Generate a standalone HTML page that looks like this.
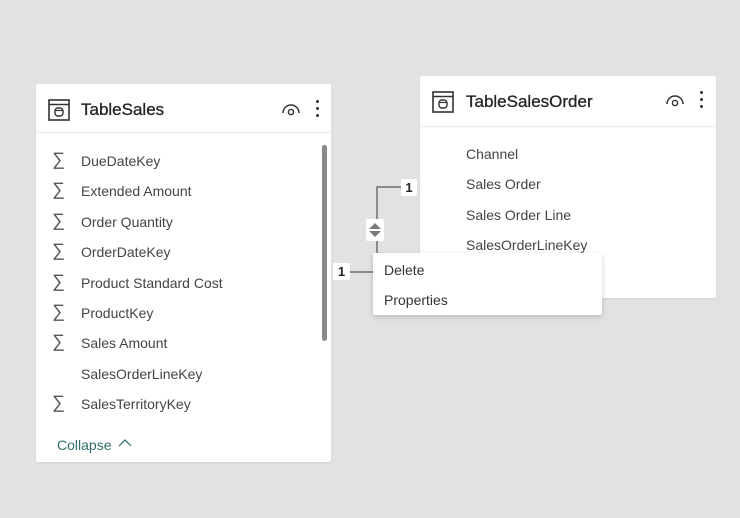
<!DOCTYPE html>
<html><head><meta charset="utf-8"><style>
body{margin:0;width:740px;height:518px;background:#e3e2e1;position:relative;overflow:hidden;font-family:"Liberation Sans",sans-serif;}
.card{position:absolute;background:#fff;border-radius:2px;box-shadow:0 1px 2px rgba(0,0,0,.08);}
.hdr{position:absolute;left:0;right:0;top:0;border-bottom:1px solid #ececec;}
.title{position:absolute;font-size:17px;color:#252423;-webkit-text-stroke:0.3px #252423;}
.row{position:absolute;font-size:14px;color:#444;white-space:nowrap;margin-top:2px;}
.sig{position:absolute;font-size:18px;color:#555;margin-top:-1px;}
.abs{position:absolute;}
.lbl{position:absolute;background:#fff;font-size:13px;font-weight:bold;color:#222;text-align:center;border-radius:2px;}
</style></head><body>
<div class="card" style="left:36px;top:84px;width:295px;height:378px;">
  <div class="hdr" style="height:48px;"></div>
  <svg class="abs" style="left:12px;top:15px" width="22" height="22" viewBox="0 0 22 22"><rect x="1" y="1" width="20" height="20" fill="none" stroke="#333" stroke-width="1.6"/><line x1="1" y1="5.5" x2="21" y2="5.5" stroke="#333" stroke-width="1.4"/><rect x="7" y="9" width="8" height="8" rx="3" fill="none" stroke="#333" stroke-width="1.4"/><line x1="7" y1="11.5" x2="15" y2="11.5" stroke="#333" stroke-width="1.2"/></svg>
  <div class="title" style="left:45px;top:16px;">TableSales</div>
  <svg class="abs" style="left:245px;top:17px" width="20" height="16" viewBox="0 0 20 16"><path d="M2 12 A8 8 0 0 1 18 12" fill="none" stroke="#333" stroke-width="1.5"/><circle cx="10" cy="11" r="2.6" fill="none" stroke="#333" stroke-width="1.4"/></svg>
  <div class="abs" style="left:280px;top:16px;width:3px;height:3px;background:#333;border-radius:50%;box-shadow:0 7px 0 #333,0 14px 0 #333"></div>
  <div class="abs" style="left:286px;top:61px;width:5px;height:196px;background:#8a8a8a;border-radius:3px;"></div>
  <div class="sig" style="left:16px;top:66px">∑</div><div class="row" style="left:45px;top:67px">DueDateKey</div>
  <div class="sig" style="left:16px;top:96px">∑</div><div class="row" style="left:45px;top:97px">Extended Amount</div>
  <div class="sig" style="left:16px;top:127px">∑</div><div class="row" style="left:45px;top:128px">Order Quantity</div>
  <div class="sig" style="left:16px;top:157px">∑</div><div class="row" style="left:45px;top:158px">OrderDateKey</div>
  <div class="sig" style="left:16px;top:188px">∑</div><div class="row" style="left:45px;top:189px">Product Standard Cost</div>
  <div class="sig" style="left:16px;top:218px">∑</div><div class="row" style="left:45px;top:219px">ProductKey</div>
  <div class="sig" style="left:16px;top:248px">∑</div><div class="row" style="left:45px;top:249px">Sales Amount</div>
  <div class="row" style="left:45px;top:280px">SalesOrderLineKey</div>
  <div class="sig" style="left:16px;top:309px">∑</div><div class="row" style="left:45px;top:310px">SalesTerritoryKey</div>
  <div class="row" style="left:21px;top:351px;color:#2f6e6a">Collapse</div>
  <svg class="abs" style="left:82px;top:354px" width="14" height="10" viewBox="0 0 14 10"><path d="M1 8 L7 2 L13 8" fill="none" stroke="#2f6e6a" stroke-width="1.2"/></svg>
</div>
<div class="card" style="left:420px;top:76px;width:296px;height:222px;">
  <div class="hdr" style="height:50px;"></div>
  <svg class="abs" style="left:12px;top:15px" width="22" height="22" viewBox="0 0 22 22"><rect x="1" y="1" width="20" height="20" fill="none" stroke="#333" stroke-width="1.6"/><line x1="1" y1="5.5" x2="21" y2="5.5" stroke="#333" stroke-width="1.4"/><rect x="7" y="9" width="8" height="8" rx="3" fill="none" stroke="#333" stroke-width="1.4"/><line x1="7" y1="11.5" x2="15" y2="11.5" stroke="#333" stroke-width="1.2"/></svg>
  <div class="title" style="left:46px;top:16px;">TableSalesOrder</div>
  <svg class="abs" style="left:245px;top:16px" width="20" height="16" viewBox="0 0 20 16"><path d="M2 12 A8 8 0 0 1 18 12" fill="none" stroke="#333" stroke-width="1.5"/><circle cx="10" cy="11" r="2.6" fill="none" stroke="#333" stroke-width="1.4"/></svg>
  <div class="abs" style="left:280px;top:15px;width:3px;height:3px;background:#333;border-radius:50%;box-shadow:0 7px 0 #333,0 14px 0 #333"></div>
  <div class="row" style="left:46px;top:68px">Channel</div>
  <div class="row" style="left:46px;top:98px">Sales Order</div>
  <div class="row" style="left:46px;top:129px">Sales Order Line</div>
  <div class="row" style="left:46px;top:159px">SalesOrderLineKey</div>
</div>
<svg class="abs" style="left:330px;top:180px" width="100" height="100">
  <path d="M71 7 H47 V92 M20 92 H47" fill="none" stroke="#6f6f6f" stroke-width="1.5"/>
</svg>
<div class="lbl" style="left:401px;top:179px;width:16px;height:17px;line-height:17px">1</div>
<div class="lbl" style="left:333px;top:263px;width:17px;height:17px;line-height:17px">1</div>
<div class="abs" style="left:366px;top:219px;width:18px;height:22px;background:#fff;border-radius:2px"></div>
<svg class="abs" style="left:366px;top:219px" width="18" height="22" viewBox="0 0 18 22"><path d="M3 10 L9 4 L15 10 Z M3 12 L9 18 L15 12 Z" fill="#7a7a7a"/></svg>
<div class="card" style="left:373px;top:253px;width:229px;height:62px;box-shadow:0 2px 6px rgba(0,0,0,.18);">
  <div class="row" style="left:11px;top:7px;color:#333">Delete</div>
  <div class="row" style="left:11px;top:37px;color:#333">Properties</div>
</div>
</body></html>
